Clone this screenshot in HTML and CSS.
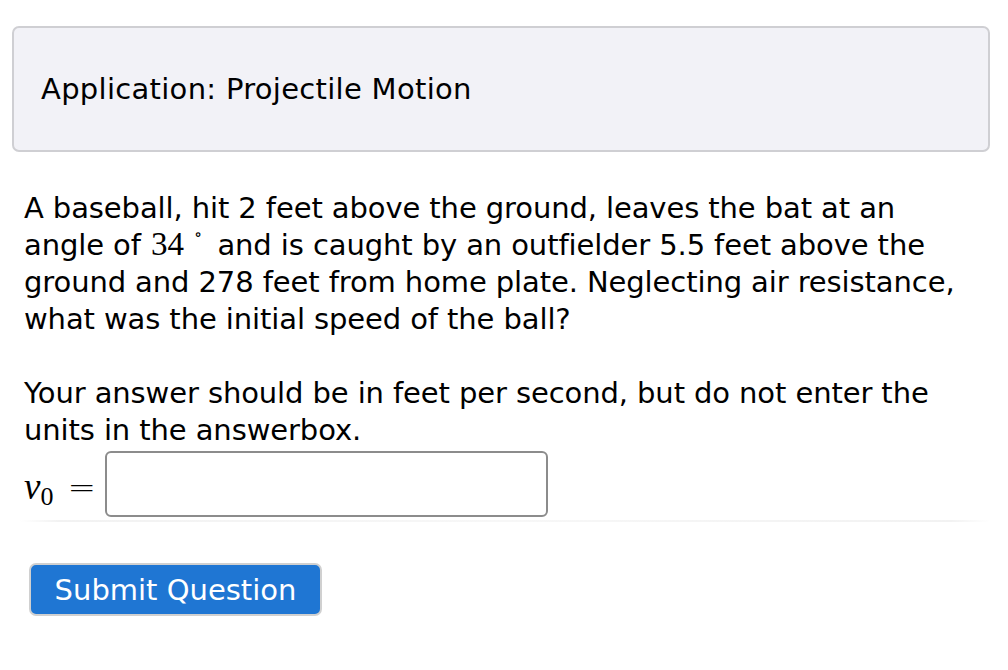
FILE: index.html
```html
<!DOCTYPE html>
<html>
<head>
<meta charset="utf-8">
<link rel="stylesheet" href="styles.css">
</head>
<body>
<div class="page">
  <div class="header">
    <h1 class="title">Application: Projectile Motion</h1>
  </div>
  <div class="question">
    <p class="para">A baseball, hit 2 feet above the ground, leaves the bat at an angle of <span class="math num">34</span><span class="math deg">∘</span> and is caught by an outfielder 5.5 feet above the ground and 278 feet from home plate. Neglecting air resistance, what was the initial speed of the ball?</p>
    <p class="para para2">Your answer should be in feet per second, but do not enter the units in the answerbox.</p>
    <div class="answer-row">
      <span class="math var">v<sub class="sub">0</sub></span>
      <span class="eq">=</span>
      <input class="answer" type="text">
    </div>
    <div class="divider"></div>
  </div>
  <div class="actions">
    <button class="submit" type="button">Submit Question</button>
  </div>
</div>
</body>
</html>
```

FILE: styles.css
```css
html, body {
  margin: 0;
  padding: 0;
  background: #ffffff;
}
body {
  font-family: "DejaVu Sans", Verdana, sans-serif;
  color: #000;
}
.page {
  padding: 26px 18px 0 12px;
}
.header {
  height: 122px;
  border: 2px solid #cfcfd3;
  border-radius: 7px;
  background: #f2f2f7;
  display: flex;
  align-items: center;
  padding-left: 27px;
}
.title {
  margin: 0;
  font-weight: normal;
  font-size: 29px;
  letter-spacing: 0.3px;
  line-height: 37px;
}
.question {
  padding: 38px 0 0 12px;
}
.para {
  margin: 0;
  font-size: 29px;
  letter-spacing: -0.1px;
  line-height: 37px;
  width: 950px;
}
.para2 {
  margin-top: 37px;
}
.math {
  font-family: "Liberation Serif", "DejaVu Serif", serif;
  letter-spacing: 0;
  line-height: 1;
}
.num {
  font-size: 33px;
  margin-left: 1px;
}
.deg {
  font-family: "DejaVu Serif", serif;
  font-size: 17px;
  line-height: 0;
  vertical-align: 15px;
  margin-left: 10px;
  margin-right: 6px;
}
.answer-row {
  display: flex;
  align-items: center;
  height: 66px;
  margin-top: 2px;
}
.var {
  font-style: italic;
  font-size: 37px;
  margin-right: 14px;
  position: relative;
  top: 2px;
}
.sub {
  font-style: normal;
  font-size: 26px;
  line-height: 1;
  vertical-align: 0;
  position: relative;
  top: 6px;
}
.eq {
  font-family: "DejaVu Sans", sans-serif;
  font-weight: 200;
  font-size: 34px;
  line-height: 1;
  margin-right: 9px;
  position: relative;
  top: 3px;
}
.answer {
  box-sizing: border-box;
  width: 443px;
  height: 66px;
  border: 2px solid #8c8c8c;
  border-radius: 6px;
  background: #fff;
  margin: 0;
}
.divider {
  height: 2px;
  margin: 3px 0 0 -4px;
  background: linear-gradient(to right, rgba(240,240,240,0), #f2f2f2 4%, #f7f7f7 50%, #f2f2f2 96%, rgba(240,240,240,0));
}
.actions {
  padding: 41px 0 0 17px;
}
.submit {
  width: 293px;
  height: 53px;
  border: 2px solid #d0d0d0;
  border-radius: 7px;
  background: #1f76d3;
  color: #fff;
  font-family: "DejaVu Sans", Verdana, sans-serif;
  font-size: 29px;
  letter-spacing: 0;
  padding: 0;
}
```
